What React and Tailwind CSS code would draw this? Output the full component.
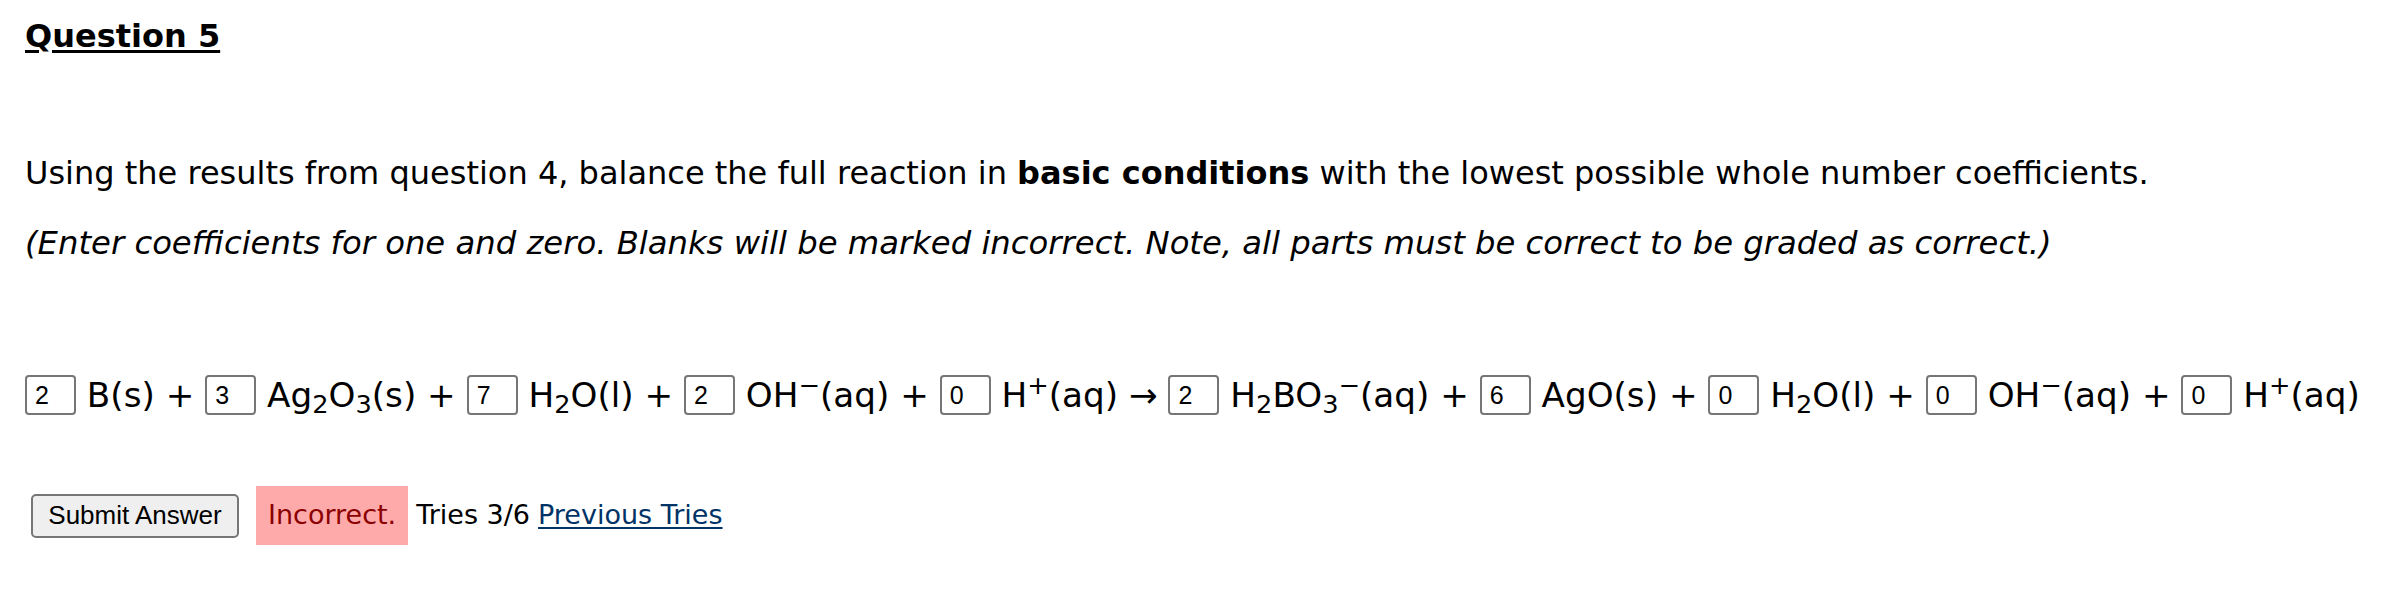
import React from "react";

const Coef = ({ v }) => (
  <span className="inline-flex shrink-0 items-center h-[40px] w-[51px] border-2 border-[#767676] rounded-[4px] pl-[8px] bg-white text-[25px] text-black">
    <span className="font-['Liberation_Sans',Arial,sans-serif] leading-none">{v}</span>
  </span>
);

export default function App() {
  return (
    <div className="bg-white min-h-[596px] pl-[25px] pt-[14px] text-black font-['DejaVu_Sans',Verdana,sans-serif]">
      <h2 className="text-[32px] font-bold underline underline-offset-[3px] decoration-[3px] leading-[44px]">Question 5</h2>
      <p className="text-[32px] mt-[97px] leading-[36px] whitespace-nowrap">
        Using the results from question 4, balance the full reaction in <b>basic conditions</b> with the lowest possible whole number coefficients.
      </p>
      <p className="text-[32.25px] italic mt-[34px] leading-[36px] whitespace-nowrap">
        (Enter coefficients for one and zero. Blanks will be marked incorrect. Note, all parts must be correct to be graded as correct.)
      </p>
      <div className="mt-[114px] h-[40px] flex items-center text-[34.2px] leading-[40px] whitespace-nowrap">
        <Coef v="2" />
        <span>&nbsp;B(s) +&nbsp;</span>
        <Coef v="3" />
        <span>&nbsp;Ag<sub>2</sub>O<sub>3</sub>(s) +&nbsp;</span>
        <Coef v="7" />
        <span>&nbsp;H<sub>2</sub>O(l) +&nbsp;</span>
        <Coef v="2" />
        <span>&nbsp;OH<sup>−</sup>(aq) +&nbsp;</span>
        <Coef v="0" />
        <span>&nbsp;H<sup>+</sup>(aq) →&nbsp;</span>
        <Coef v="2" />
        <span>&nbsp;H<sub>2</sub>BO<sub>3</sub><sup>−</sup>(aq) +&nbsp;</span>
        <Coef v="6" />
        <span>&nbsp;AgO(s) +&nbsp;</span>
        <Coef v="0" />
        <span>&nbsp;H<sub>2</sub>O(l) +&nbsp;</span>
        <Coef v="0" />
        <span>&nbsp;OH<sup>−</sup>(aq) +&nbsp;</span>
        <Coef v="0" />
        <span>&nbsp;H<sup>+</sup>(aq)</span>
      </div>
      <div className="mt-[71px] flex items-center text-[27px] whitespace-nowrap">
        <button className="ml-[6px] h-[44px] w-[208px] border-2 border-[#767676] rounded-[5px] bg-[#efefef] text-[26px] font-['Liberation_Sans',Arial,sans-serif] text-black">Submit Answer</button>
        <span className="ml-[17px] h-[59px] px-[12px] flex items-center bg-[#ffaaaa] text-[#8b0000]">Incorrect.</span>
        <span className="ml-[8px]">Tries 3/6</span>
        <a href="#" className="ml-[8px] text-[#003366] underline underline-offset-[3px]">Previous Tries</a>
      </div>
    </div>
  );
}
